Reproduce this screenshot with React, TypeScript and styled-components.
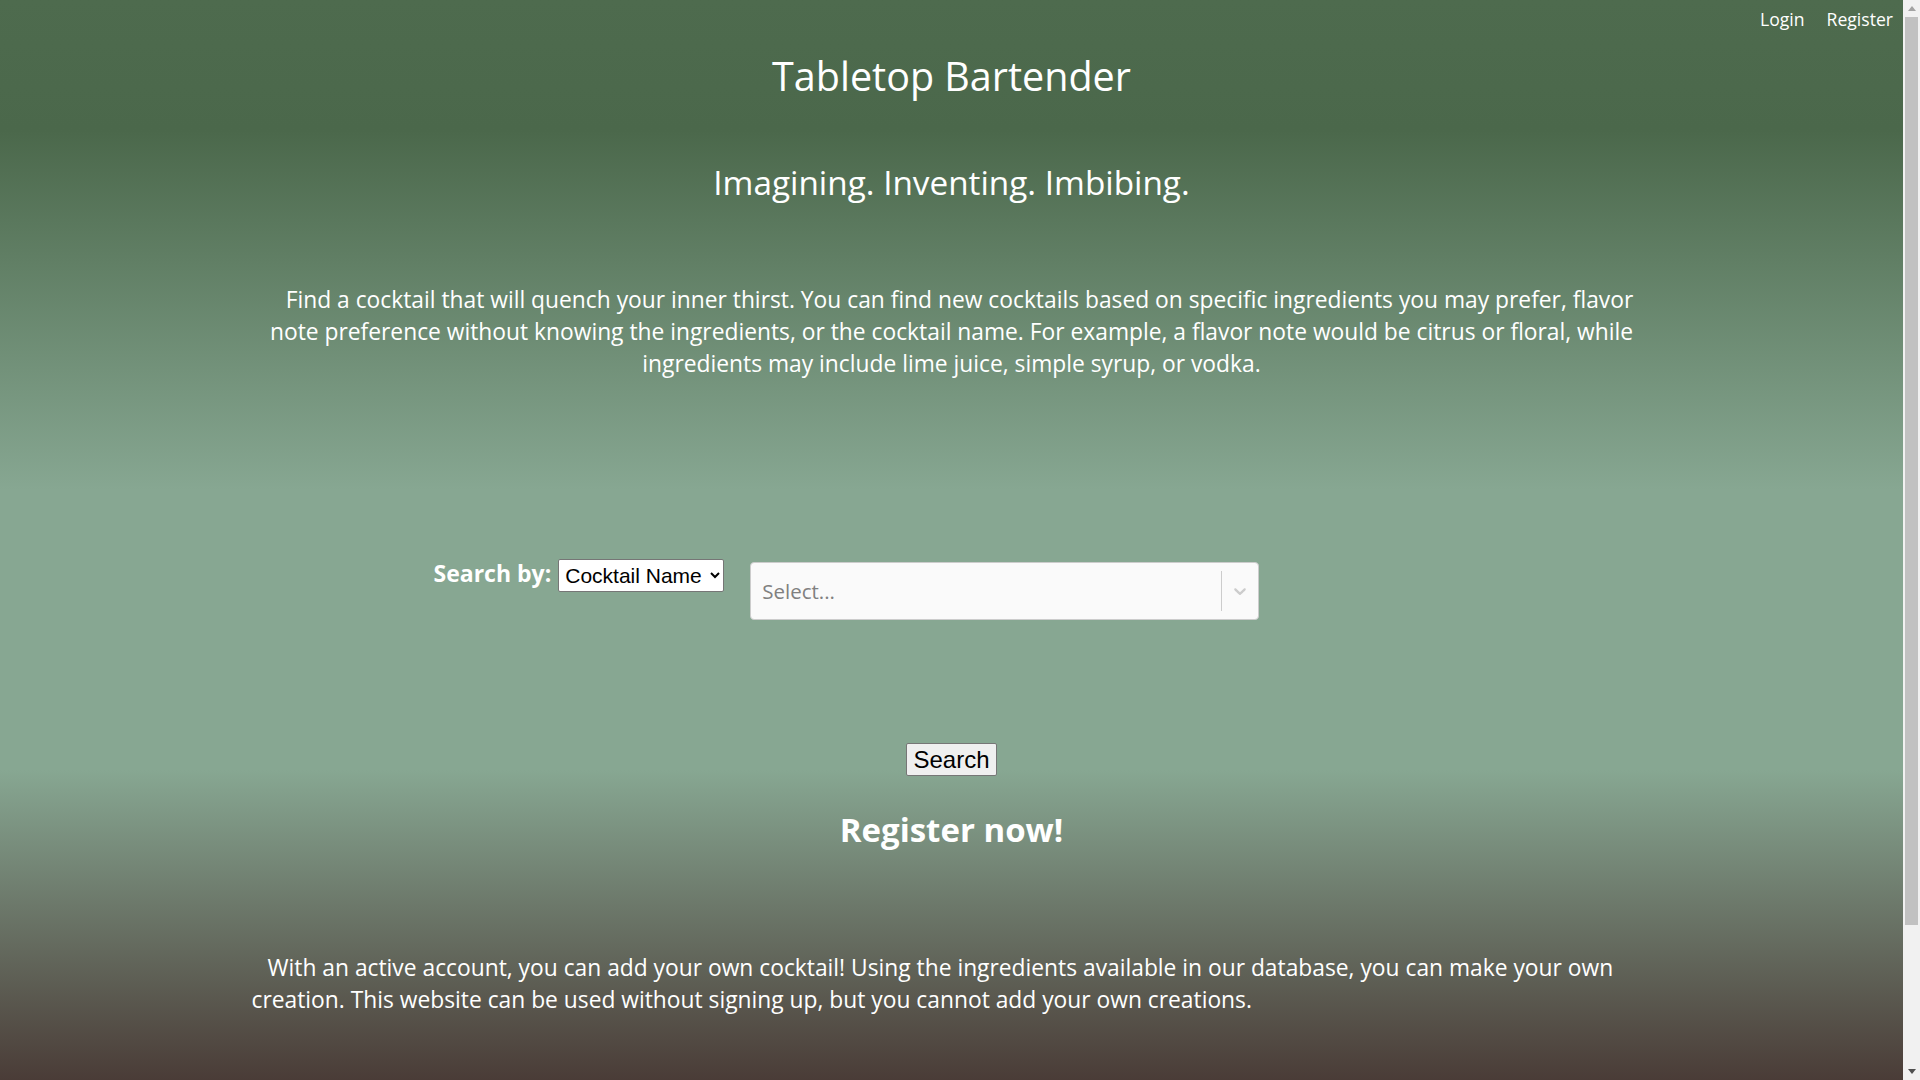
import React from "react";
import styled, { createGlobalStyle } from "styled-components";

const GlobalStyle = createGlobalStyle`
  html, body {
    margin: 0;
    padding: 0;
    overflow: hidden;
  }
  body {
    font-family: "Open Sans", "Noto Sans", sans-serif;
    color: #ffffff;
  }
  * { box-sizing: border-box; }
`;

const Window = styled.div`
  display: flex;
  height: 100vh;
  overflow: hidden;
`;

const Viewport = styled.div`
  flex: 1;
  min-width: 0;
  overflow: hidden;
`;

const Page = styled.div`
  min-height: 1244px;
  padding-bottom: 230px;
  background: linear-gradient(
    to bottom,
    #4e6b4e 0px,
    #4b684b 130px,
    #87a792 490px,
    #87a792 770px,
    #4a3c37 1080px,
    #3f2d29 1244px
  );
`;

const Nav = styled.nav`
  display: flex;
  justify-content: flex-end;
  gap: 22px;
  height: 32px;
  padding: 6px 10px 0 0;
`;

const NavLink = styled.a`
  font-size: 17.6px;
  line-height: 26px;
  color: #ffffff;
  text-decoration: none;
  cursor: pointer;
`;

const Title = styled.h1`
  margin: 21px 0 0;
  font-size: 39.5px;
  line-height: 46px;
  font-weight: 400;
  text-align: center;
`;

const Tagline = styled.h2`
  margin: 65px 0 0;
  font-size: 33.3px;
  line-height: 36px;
  font-weight: 400;
  text-align: center;
`;

const Container = styled.main`
  width: 1400px;
  margin: 0 auto;
`;

const Paragraph = styled.p<{ $align: "center" | "left"; $top: number }>`
  margin: ${(p) => p.$top}px 0 0;
  font-size: 22.8px;
  line-height: 32px;
  text-indent: 16px;
  text-align: ${(p) => p.$align};
`;

const SearchRow = styled.div`
  display: flex;
  align-items: flex-start;
  margin-top: 179px;
  padding-left: 182px;
`;

const Label = styled.label`
  font-size: 23px;
  line-height: 28px;
  font-weight: 700;
  margin-right: 7px;
`;

const NativeSelect = styled.select`
  width: 166px;
  height: 33px;
  font-family: "Liberation Sans", Arial, sans-serif;
  font-size: 21px;
  color: #000;
  background: #fff;
  border: 1px solid #767676;
  border-radius: 2px;
  padding: 0 2px;
`;

const ComboBox = styled.div`
  display: flex;
  align-items: center;
  width: 509px;
  height: 58px;
  margin: 3px 0 0 26px;
  background: #fafafa;
  border: 1px solid #cccccc;
  border-radius: 4px;
`;

const Placeholder = styled.div`
  flex: 1;
  padding-left: 11px;
  font-size: 20.5px;
  color: #808080;
`;

const Separator = styled.span`
  align-self: stretch;
  width: 1px;
  margin: 8px 0;
  background: #cccccc;
`;

const Indicator = styled.div`
  display: flex;
  padding: 8px;
  color: #cccccc;
`;

const ButtonRow = styled.div`
  display: flex;
  justify-content: center;
  margin-top: 123px;
`;

const SearchButton = styled.button`
  width: 91px;
  height: 33px;
  font-family: "Liberation Sans", Arial, sans-serif;
  font-size: 24px;
  color: #000;
  background: #efefef;
  border: 1px solid #767676;
  border-radius: 2px;
  padding: 0;
`;

const Callout = styled.h2`
  margin: 37px 0 0;
  font-size: 33px;
  line-height: 34px;
  font-weight: 700;
  text-align: center;
`;

const ScrollBar = styled.aside`
  display: flex;
  flex-direction: column;
  width: 17px;
  flex-shrink: 0;
  background: #f1f1f1;
`;

const ScrollArrow = styled.div<{ $active: boolean }>`
  display: flex;
  align-items: center;
  justify-content: center;
  height: 17px;
  color: ${(p) => (p.$active ? "#505050" : "#a3a3a3")};
`;

const ScrollTrack = styled.div`
  flex: 1;
  padding: 0 2px;
`;

const ScrollThumb = styled.div`
  height: 908px;
  background: #c1c1c1;
`;

const Chevron = () => (
  <svg width="20" height="20" viewBox="0 0 20 20" fill="currentColor" aria-hidden="true">
    <path d="M4.516 7.548c0.436-0.446 1.043-0.481 1.576 0l3.908 3.747 3.908-3.747c0.533-0.481 1.141-0.446 1.574 0 0.436 0.445 0.408 1.197 0 1.615-0.406 0.418-4.695 4.502-4.695 4.502-0.217 0.223-0.502 0.335-0.787 0.335s-0.57-0.112-0.789-0.335c0 0-4.287-4.084-4.695-4.502s-0.436-1.17 0-1.615z" />
  </svg>
);

const Triangle = ({ up }: { up: boolean }) => (
  <svg width="8" height="5" viewBox="0 0 8 5" fill="currentColor" aria-hidden="true">
    <path d={up ? "M0 5 L4 0 L8 5 Z" : "M0 0 L8 0 L4 5 Z"} />
  </svg>
);

export default function App() {
  return (
    <>
      <GlobalStyle />
      <Window>
        <Viewport>
          <Page>
            <Nav>
              <NavLink>Login</NavLink>
              <NavLink>Register</NavLink>
            </Nav>
            <Title>Tabletop Bartender</Title>
            <Tagline>Imagining. Inventing. Imbibing.</Tagline>
            <Container>
              <Paragraph $align="center" $top={84}>
                Find a cocktail that will quench your inner thirst. You can find new cocktails based on specific
                ingredients you may prefer, flavor note preference without knowing the ingredients, or the
                cocktail name. For example, a flavor note would be citrus or floral, while ingredients may include
                lime juice, simple syrup, or vodka.
              </Paragraph>
              <SearchRow>
                <Label htmlFor="search-by">Search by:</Label>
                <NativeSelect id="search-by" defaultValue="name">
                  <option value="name">Cocktail Name</option>
                  <option value="ingredient">Ingredient</option>
                  <option value="flavor">Flavor Note</option>
                </NativeSelect>
                <ComboBox>
                  <Placeholder>Select...</Placeholder>
                  <Separator />
                  <Indicator>
                    <Chevron />
                  </Indicator>
                </ComboBox>
              </SearchRow>
              <ButtonRow>
                <SearchButton type="button">Search</SearchButton>
              </ButtonRow>
              <Callout>Register now!</Callout>
              <Paragraph $align="left" $top={105}>
                With an active account, you can add your own cocktail! Using the ingredients available in our
                database, you can make your own creation. This website can be used without signing up, but you
                cannot add your own creations.
              </Paragraph>
            </Container>
          </Page>
        </Viewport>
        <ScrollBar aria-hidden="true">
          <ScrollArrow $active={false}>
            <Triangle up />
          </ScrollArrow>
          <ScrollTrack>
            <ScrollThumb />
          </ScrollTrack>
          <ScrollArrow $active>
            <Triangle up={false} />
          </ScrollArrow>
        </ScrollBar>
      </Window>
    </>
  );
}
